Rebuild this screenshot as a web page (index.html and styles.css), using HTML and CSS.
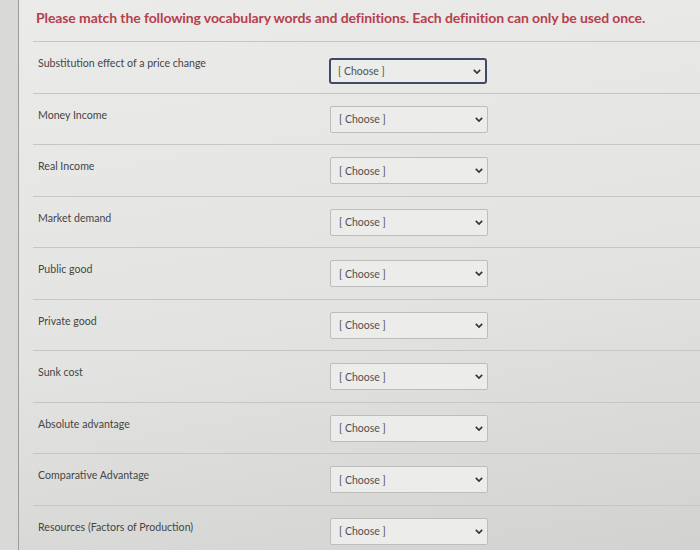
FILE: index.html
```html
<!DOCTYPE html>
<html>
<head>
<meta charset="utf-8">
<link rel="stylesheet" href="styles.css">
</head>
<body>
<div class="page">
  <div class="side"></div>
  <div class="main">
    <h1 class="title">Please match the following vocabulary words and definitions. Each definition can only be used once.</h1>
    <div class="rows">
      <div class="row"><div class="label">Substitution effect of a price change</div><div class="sel focus"><span>[ Choose ]</span><svg viewBox="0 0 10 6"><path d="M1 1l4 4 4-4"/></svg></div></div>
      <div class="row"><div class="label">Money Income</div><div class="sel"><span>[ Choose ]</span><svg viewBox="0 0 10 6"><path d="M1 1l4 4 4-4"/></svg></div></div>
      <div class="row"><div class="label">Real Income</div><div class="sel"><span>[ Choose ]</span><svg viewBox="0 0 10 6"><path d="M1 1l4 4 4-4"/></svg></div></div>
      <div class="row"><div class="label">Market demand</div><div class="sel"><span>[ Choose ]</span><svg viewBox="0 0 10 6"><path d="M1 1l4 4 4-4"/></svg></div></div>
      <div class="row"><div class="label">Public good</div><div class="sel"><span>[ Choose ]</span><svg viewBox="0 0 10 6"><path d="M1 1l4 4 4-4"/></svg></div></div>
      <div class="row"><div class="label">Private good</div><div class="sel"><span>[ Choose ]</span><svg viewBox="0 0 10 6"><path d="M1 1l4 4 4-4"/></svg></div></div>
      <div class="row"><div class="label">Sunk cost</div><div class="sel"><span>[ Choose ]</span><svg viewBox="0 0 10 6"><path d="M1 1l4 4 4-4"/></svg></div></div>
      <div class="row"><div class="label">Absolute advantage</div><div class="sel"><span>[ Choose ]</span><svg viewBox="0 0 10 6"><path d="M1 1l4 4 4-4"/></svg></div></div>
      <div class="row"><div class="label">Comparative Advantage</div><div class="sel"><span>[ Choose ]</span><svg viewBox="0 0 10 6"><path d="M1 1l4 4 4-4"/></svg></div></div>
      <div class="row"><div class="label">Resources (Factors of Production)</div><div class="sel"><span>[ Choose ]</span><svg viewBox="0 0 10 6"><path d="M1 1l4 4 4-4"/></svg></div></div>
    </div>
  </div>
</div>
</body>
</html>
```
FILE: styles.css
```css
html, body {
  margin: 0;
  padding: 0;
  height: 100%;
}
body {
  font-family: Lato, "Liberation Sans", sans-serif;
  background: linear-gradient(170deg, #ebebe9 0%, #e3e4e1 55%, #d2d3d0 100%);
  overflow: hidden;
}
.page {
  display: flex;
  height: 550px;
}
.side {
  width: 18px;
  flex: none;
  background: #d9d9d7;
  border-right: 1px solid #9c9c9a;
}
.main {
  flex: 1;
  padding-left: 14px;
}
.title {
  margin: 0;
  padding: 9px 0 0 3px;
  height: 41px;
  box-sizing: border-box;
  font-size: 14px;
  font-weight: 700;
  color: #b5404e;
  letter-spacing: -0.1px;
  white-space: nowrap;
}
.rows {
  display: flex;
  flex-direction: column;
}
.row {
  height: 51.5px;
  box-sizing: border-box;
  border-top: 1px solid #c6c7c4;
  display: flex;
  align-items: flex-start;
}
.label {
  width: 297px;
  flex: none;
  padding: 15px 0 0 5px;
  box-sizing: border-box;
  font-size: 10.6px;
  color: #454545;
}
.sel {
  margin-top: 12px;
  width: 158px;
  height: 27px;
  box-sizing: border-box;
  border: 1px solid #bdbdbb;
  border-radius: 2px;
  background: #ececea;
  display: flex;
  align-items: center;
  justify-content: space-between;
  padding: 0 4px 0 8px;
  font-size: 10.5px;
  color: #505050;
}
.sel.focus {
  border: 2px solid #404a66;
  border-radius: 3px;
  padding-left: 7px;
  margin-left: -1px;
  margin-top: 16px;
  height: 26px;
}
.sel svg {
  width: 8px;
  height: 5px;
  fill: none;
  stroke: #333;
  stroke-width: 2;
}
```
